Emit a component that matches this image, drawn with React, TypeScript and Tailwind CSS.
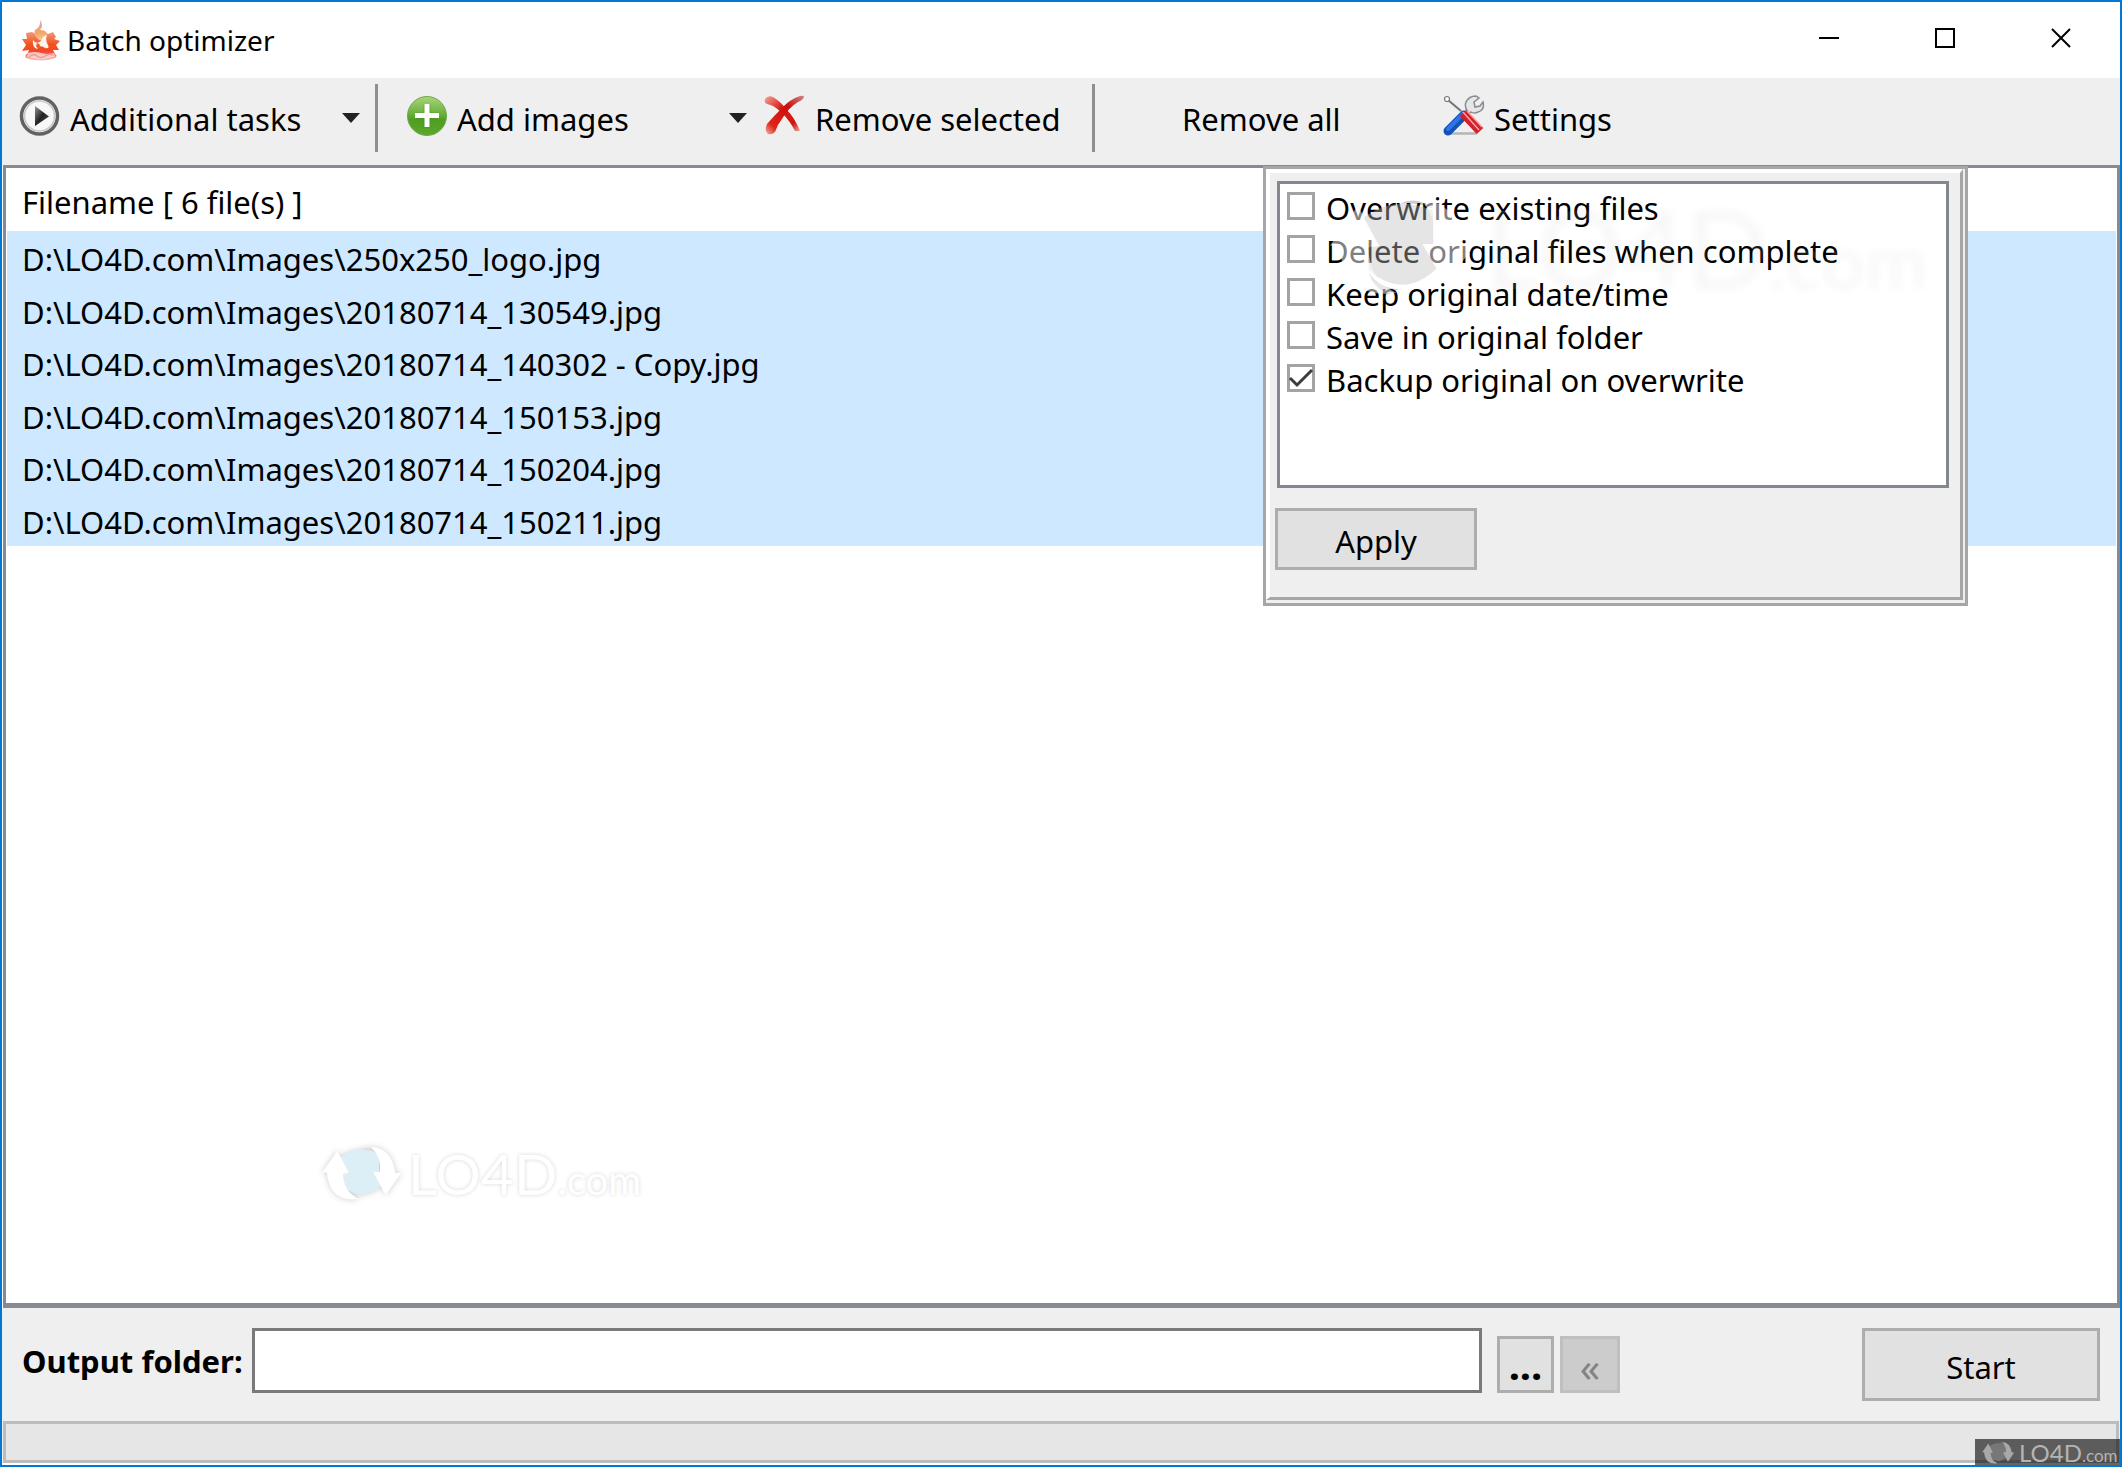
import clsx from "clsx";
import type { ReactNode } from "react";

const files = [
	"D:\\LO4D.com\\Images\\250x250_logo.jpg",
	"D:\\LO4D.com\\Images\\20180714_130549.jpg",
	"D:\\LO4D.com\\Images\\20180714_140302 - Copy.jpg",
	"D:\\LO4D.com\\Images\\20180714_150153.jpg",
	"D:\\LO4D.com\\Images\\20180714_150204.jpg",
	"D:\\LO4D.com\\Images\\20180714_150211.jpg",
];

const options = [
	{ id: "overwrite", label: "Overwrite existing files", checked: false },
	{ id: "delete", label: "Delete original files when complete", checked: false },
	{ id: "keep-date", label: "Keep original date/time", checked: false },
	{ id: "same-folder", label: "Save in original folder", checked: false },
	{ id: "backup", label: "Backup original on overwrite", checked: true },
];

const AppIcon = () => (
	<svg viewBox="0 0 40 42" className="w-10 h-[42px]" aria-hidden="true">
		<defs>
			<linearGradient id="app-red" x1="0" y1="0" x2="0" y2="1">
				<stop offset="0" stopColor="#eda184" />
				<stop offset="0.45" stopColor="#f4511e" />
				<stop offset="0.7" stopColor="#f0482a" />
				<stop offset="1" stopColor="#f9c4be" />
			</linearGradient>
			<linearGradient id="app-flame" x1="0" y1="0" x2="0" y2="1">
				<stop offset="0" stopColor="#dcaea2" />
				<stop offset="0.6" stopColor="#f3a468" />
				<stop offset="1" stopColor="#fbc98a" />
			</linearGradient>
		</defs>
		<path
			d="M0 20 L5 20 L4 14 L10 13 L14 15 L20 12 L26 15 L31 13 L34 18 L32 20 L38 22 L34 26 L37 31 L31 31 L33 35 Q36 37 33 39 Q19 44 4 39 Q2 36 6 34 L7 31 L0 32 L4 26 Z"
			fill="url(#app-red)"
		/>
		<path
			d="M18 1 Q22 7 18 11 Q27 11 24 18 Q21 24 16 20 Q11 16 13 11 Q19 8 18 1 Z"
			fill="url(#app-flame)"
		/>
		<path d="M11 21 Q14 26 19 22 Q20 17 25 16 Q23 21 26 26 Q28 30 23 29 Q18 25 15 30 Q10 28 11 21Z" fill="#fff3ee" />
		<path d="M15 24 Q19 25 18 29 Q15 30 14 27Z" fill="#f25a2c" />
		<path d="M6 34 Q12 32 19 34 T32 34 L33 38 Q19 42 5 38Z" fill="#fbdcd9" opacity="0.8" />
		<path d="M7 38 Q11 34 15 37 T23 37 T31 36" fill="none" stroke="#eb9a9a" strokeWidth="1.5" />
	</svg>
);

const PlayIcon = () => (
	<svg viewBox="0 0 42 42" className="size-[42px]" aria-hidden="true">
		<defs>
			<linearGradient id="play-fill" x1="0" y1="0" x2="1" y2="1">
				<stop offset="0" stopColor="#999" />
				<stop offset="0.5" stopColor="#222" />
				<stop offset="1" stopColor="#555" />
			</linearGradient>
		</defs>
		<circle cx="20.500" cy="21" r="18" fill="#f7f7f7" stroke="#626262" strokeWidth="3.5" />
		<circle cx="20.500" cy="21" r="15" fill="none" stroke="#c9c9c9" strokeWidth="1.5" />
		<path d="M16 11 L30 21.500 L16 31 Z" fill="url(#play-fill)" />
	</svg>
);

const AddIcon = () => (
	<svg viewBox="0 0 42 42" className="size-[42px]" aria-hidden="true">
		<defs>
			<linearGradient id="add-fill" x1="0" y1="0" x2="0" y2="1">
				<stop offset="0" stopColor="#a9d47c" />
				<stop offset="0.45" stopColor="#6ab03c" />
				<stop offset="0.6" stopColor="#4f9d21" />
				<stop offset="1" stopColor="#5ba82d" />
			</linearGradient>
		</defs>
		<circle cx="21" cy="21" r="19.500" fill="url(#add-fill)" stroke="#6fab48" />
		<path d="M21 9.500V32.500M9.500 21H32.500" stroke="#3f8a1b" strokeWidth="7" opacity="0.35" />
		<path d="M21 9V32M9 20.500H33" stroke="#fff" strokeWidth="5" />
	</svg>
);

const RemoveIcon = () => (
	<svg viewBox="0 0 42 42" className="size-[42px]" aria-hidden="true">
		<defs>
			<linearGradient id="x-a" x1="0" y1="0" x2="1" y2="1">
				<stop offset="0" stopColor="#f3a59c" />
				<stop offset="0.4" stopColor="#d91a10" />
				<stop offset="0.8" stopColor="#cf1710" />
				<stop offset="1" stopColor="#eba79f" />
			</linearGradient>
			<linearGradient id="x-b" x1="1" y1="0" x2="0" y2="1">
				<stop offset="0" stopColor="#c98a8a" />
				<stop offset="0.35" stopColor="#cc0d0d" />
				<stop offset="0.8" stopColor="#df2417" />
				<stop offset="1" stopColor="#f3b0a8" />
			</linearGradient>
		</defs>
		<path d="M1 4 Q4 0 9 2 Q17 7 22 14 Q31 23 36 36 L31 36 Q26 26 18 18 Q10 10 3 9 Q0 8 1 4Z" fill="url(#x-a)" />
		<path d="M40 2 Q39 5 34 7 Q24 13 18 24 Q13 30 11 37 Q8 40 4 39 Q0 35 3 29 Q10 21 17 14 Q26 4 36 1 Q40 0 40 2Z" fill="url(#x-b)" />
	</svg>
);

const ToolsIcon = () => (
	<svg viewBox="0 0 42 42" className="size-[42px]" aria-hidden="true">
		<path d="M7 38.500H34" stroke="#b5b5b5" strokeWidth="2.500" />
		<path d="M25 17 Q21 12 23 7 Q26 1 33 1 L36 3 L31 7 L32 12 L37 11 L40 7 Q42 15 35 17 Q31 19 28 17 L25 20Z" fill="#e4e6ea" stroke="#8b8b8b" strokeWidth="1.500" />
		<path d="M24 17 L28 20 L25 23 L21 20Z" fill="#5c78bc" />
		<path d="M5 5 L18 16" fill="none" stroke="#777" strokeWidth="2.200" />
		<circle cx="4" cy="4" r="2.500" fill="#fff" stroke="#777" strokeWidth="1.200" />
		<path d="M21 20 L5 36" stroke="#1450b8" strokeWidth="9" strokeLinecap="round" />
		<path d="M20 19 L5 34" stroke="#2f74e4" strokeWidth="4" strokeLinecap="round" />
		<path d="M20 18 L37 36" stroke="#d3202b" strokeWidth="9" />
		<path d="M20 17 L36 35M24 16 L39 32" stroke="#f7a5a5" strokeWidth="1.500" />
	</svg>
);

const CaretButton = ({ label }: { label: string }) => (
	<button type="button" aria-label={label} className="w-8 h-[68px] flex items-center justify-center">
		<svg viewBox="0 0 18 10" className="w-[18px] h-[10px]" aria-hidden="true">
			<path d="M0 0H18L9 10Z" fill="#222" />
		</svg>
	</button>
);

interface ToolButtonProps {
	icon?: ReactNode;
	children: ReactNode;
	className: string;
}

const ToolButton = ({ icon, children, className }: ToolButtonProps) => (
	<button type="button" className={clsx("flex items-center gap-[9px] whitespace-nowrap", className)}>
		{icon && <span className="pb-1">{icon}</span>}
		<span className="pt-[2px]">{children}</span>
	</button>
);

const Separator = () => <div className="ml-2 w-[3px] h-[68px] bg-[#8f8f8f]" />;

const WindowButtons = () => {
	const buttons = [
		{ label: "Minimize", path: "M0 10H20" },
		{ label: "Maximize", path: "M1 1H19V19H1Z" },
		{ label: "Close", path: "M1 1L19 19M19 1L1 19" },
	];

	return (
		<div className="ml-auto mr-px flex">
			{buttons.map((button) => (
				<button
					key={button.label}
					type="button"
					aria-label={button.label}
					className="w-[116px] flex items-center justify-center pb-1"
				>
					<svg viewBox="0 0 20 20" className="size-5" aria-hidden="true">
						<path d={button.path} fill="none" stroke="#000" strokeWidth="2" />
					</svg>
				</button>
			))}
		</div>
	);
};

interface WatermarkProps {
	className: string;
	iconClass: string;
	nameClass: string;
	domainClass: string;
	disc: string;
	arrow: string;
	edge: string;
}

const Watermark = ({ className, iconClass, nameClass, domainClass, disc, arrow, edge }: WatermarkProps) => (
	<div
		aria-hidden="true"
		className={clsx(
			"absolute pointer-events-none flex items-center font-['Lato'] leading-none whitespace-nowrap",
			className
		)}
	>
		<svg viewBox="0 0 84 58" className={clsx("shrink-0", iconClass)}>
			<path d="M40 4 Q49 -1 60 7 Q50 3 40 4ZM22 43 Q28 52 39 53 L33 56 Q24 51 22 43Z" fill={edge} />
			<path d="M22 10 Q39 -1 59 8 L59 27 L53 27 L61 41 Q42 59 22 42 L22 29 L28 28 L19 12Z" fill={disc} />
			<path d="M0 28 L16 5 L28 28 L22 29 Q22 47 38 55 Q8 59 5 27Z" fill={arrow} />
			<path d="M51 1 Q72 2 76 28 L82 28 L66 51 L53 27 L60 27 Q62 12 51 1Z" fill={arrow} />
		</svg>
		<span className={nameClass}>
			LO4D<span className={domainClass}>.com</span>
		</span>
	</div>
);

const OptionsPopup = () => (
	<div className="absolute -top-[2px] right-[149px] w-[705px] h-[440px] border-[3px] border-[#a6a6a6] bg-[#efefef] pr-[2px] pb-[3px]">
		<div className="h-full border-r-[3px] border-b-[3px] border-b-[#a6a6a6] border-r-[#a6a6a6] border-t-4 border-t-white border-l-4 border-l-white pt-2 px-[5px]">
			<div className="relative ml-[2px] mr-[6px] h-[307px] border-[3px] border-[#828790] bg-white pt-[2px] pl-[7px] flex flex-col gap-[3px]">
				{options.map((option) => (
					<div key={option.id} className="flex items-center gap-[11px] h-10">
						<span className="grid">
							<input
								id={option.id}
								type="checkbox"
								defaultChecked={option.checked}
								className="peer col-start-1 row-start-1 appearance-none size-7 border-[3px] border-[#a3a3a3] bg-white"
							/>
							<svg
								viewBox="0 0 28 28"
								className="col-start-1 row-start-1 size-7 invisible peer-checked:visible pointer-events-none"
								aria-hidden="true"
							>
								<path d="M3 14L10 21L25 6" fill="none" stroke="#3c3c3c" strokeWidth="3" />
							</svg>
						</span>
						<label htmlFor={option.id} className="whitespace-nowrap pt-1">
							{option.label}
						</label>
					</div>
				))}
				<Watermark
					className="left-[50px] top-[9px] gap-2"
					iconClass="w-[147px] h-[105px]"
					nameClass="text-[108px] text-white/10 [text-shadow:0_0_8px_rgb(0_0_0/0.04)]"
					domainClass="text-[76px]"
					disc="rgb(190 190 190 / 0.4)"
					arrow="rgb(255 255 255 / 0.5)"
					edge="rgb(0 0 0 / 0.2)"
				/>
			</div>
			<button type="button" className="mt-5 w-[202px] h-[62px] border-[3px] border-[#adadad] bg-[#e1e1e1] pt-1">
				Apply
			</button>
		</div>
	</div>
);

const App = () => {
	return (
		<div className="relative min-h-screen flex flex-col border-2 border-[#0078d7] bg-white text-black text-[31px] leading-10 font-['Noto_Sans','Open_Sans',sans-serif] overflow-hidden">
			<header className="h-[76px] flex pl-5 shrink-0">
				<div className="flex items-center gap-[5px]">
					<AppIcon />
					<h1 className="text-[28px]">Batch optimizer</h1>
				</div>
				<WindowButtons />
			</header>

			<nav className="h-[87px] shrink-0 bg-[#efefef] flex items-center pb-2">
				<ToolButton icon={<PlayIcon />} className="w-[333px] pl-[17px]">
					Additional tasks
				</ToolButton>
				<CaretButton label="More tasks" />
				<Separator />
				<ToolButton icon={<AddIcon />} className="w-[344px] pl-7">
					Add images
				</ToolButton>
				<CaretButton label="More ways to add images" />
				<ToolButton icon={<RemoveIcon />} className="w-[330px] pl-[10px]">
					Remove selected
				</ToolButton>
				<Separator />
				<ToolButton className="w-[320px] pl-[87px]">Remove all</ToolButton>
				<ToolButton icon={<ToolsIcon />} className="pl-7">
					Settings
				</ToolButton>
			</nav>

			<main className="relative flex-1 ml-px border-[3px] border-b-[5px] border-[#868b93] px-px">
				<table className="w-full h-[378px]">
					<thead>
						<tr className="h-[63px]">
							<th className="pl-[15px] pt-1 text-left font-normal">Filename [ 6 file(s) ]</th>
						</tr>
					</thead>
					<tbody className="bg-[#cde8ff]">
						{files.map((file) => (
							<tr key={file}>
								<td className="pl-[15px] pt-1">{file}</td>
							</tr>
						))}
					</tbody>
				</table>
				<Watermark
					className="left-[315px] bottom-[101px] gap-1"
					iconClass="w-[83px] h-[56px] drop-shadow-[0_0_3px_rgb(0_0_0/0.2)]"
					nameClass="text-[57px] text-white [text-shadow:0_0_4px_rgb(0_0_0/0.16)]"
					domainClass="text-[40px]"
					disc="#dceef6"
					arrow="#ffffff"
					edge="#dddddd"
				/>
				<OptionsPopup />
			</main>

			<footer className="shrink-0 bg-[#efefef]">
				<div className="h-[113px] flex items-start pt-5 pl-5 pr-5">
					<label htmlFor="output-folder" className="w-[230px] h-[65px] flex items-center font-bold whitespace-nowrap">
						Output folder:
					</label>
					<input
						id="output-folder"
						type="text"
						className="flex-1 min-w-0 h-[65px] border-[3px] border-[#7a7a7a] bg-white px-2"
					/>
					<div className="h-[65px] flex items-end gap-[6px] ml-[15px]">
						<button
							type="button"
							aria-label="Browse"
							className="w-[57px] h-[57px] border-[3px] border-[#adadad] bg-[#e1e1e1] text-[40px] font-bold"
						>
							...
						</button>
						<button
							type="button"
							disabled
							aria-label="Previous folder"
							className="w-[60px] h-[57px] border-[3px] border-[#bfbfbf] bg-[#cccccc] text-[40px] text-[#838383] pt-1"
						>
							«
						</button>
					</div>
					<button
						type="button"
						className="ml-[242px] w-[238px] h-[73px] border-[3px] border-[#adadad] bg-[#e1e1e1] pt-1"
					>
						Start
					</button>
				</div>
				<div
					role="progressbar"
					aria-label="Progress"
					aria-valuenow={0}
					className="ml-px mr-px h-[42px] border-[3px] border-[#bcbcbc] bg-[#e6e6e6]"
				/>
				<div className="h-[2px] bg-white" />
			</footer>

			<Watermark
				className="-right-[2px] -bottom-[2px] w-[147px] h-7 pl-[7px] gap-1 bg-black/60"
				iconClass="w-[33px] h-6"
				nameClass="text-[24px] text-[#b4b4b4]"
				domainClass="text-[17px]"
				disc="#777777"
				arrow="#a8a8a8"
				edge="#8a8a8a"
			/>
		</div>
	);
};

export default App;
